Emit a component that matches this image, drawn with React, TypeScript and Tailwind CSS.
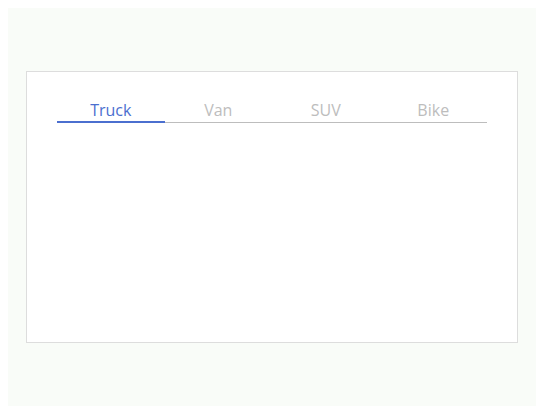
import * as React from "react";

const tabs = ["Truck", "Van", "SUV", "Bike"];

export default function App() {
  const [active, setActive] = React.useState(0);

  return (
    <div className="h-[414px] w-full bg-white p-2 font-['Open_Sans',sans-serif]">
      <div className="h-[398px] bg-[#f9fcf8] px-[18px] pt-[63px]">
        <div className="h-[272px] border border-[#dddddd] bg-white px-[30px] pt-[26px]">
          <div className="flex border-b border-[#bdbdbd]">
            {tabs.map((tab, i) => (
              <button
                key={tab}
                onClick={() => setActive(i)}
                className={
                  i === active
                    ? "-mb-px flex-1 border-b-2 border-[#4b6fcf] pt-px text-center text-base leading-[22px] text-[#4b6fcf]"
                    : "-mb-px flex-1 border-b-2 border-transparent pt-px text-center text-base leading-[22px] text-[#bdbdbd]"
                }
              >
                {tab}
              </button>
            ))}
          </div>
        </div>
      </div>
    </div>
  );
}
